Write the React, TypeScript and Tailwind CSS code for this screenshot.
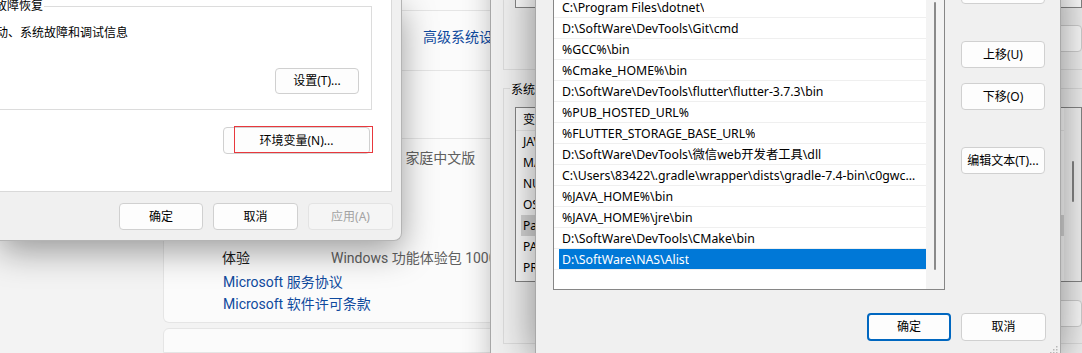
import React from "react";

const FONT = "font-['Noto_Sans','Noto_Sans_CJK_SC',sans-serif]";

function Btn({
  children,
  className = "",
  variant = "normal",
}: {
  children?: React.ReactNode;
  className?: string;
  variant?: "normal" | "disabled" | "default";
}) {
  const look =
    variant === "disabled"
      ? "border border-[#e3e3e3] bg-[#f5f5f5] text-[#a3a3a3]"
      : variant === "default"
      ? "border-2 border-[#0067c0] bg-[#fdfdfd] text-black"
      : "border border-[#d0d0d0] bg-[#fdfdfd] text-black";
  return (
    <div
      className={
        "flex shrink-0 items-center justify-center rounded-[4px] text-[12px] leading-none " +
        look +
        " " +
        className
      }
    >
      {children}
    </div>
  );
}

function SettingsPage() {
  const specs: [string, React.ReactNode][] = [
    [
      "版本",
      <>
        <span className="tracking-[-0.5px]">Windows 11 </span>家庭中文版
      </>,
    ],
    ["版本号", "22H2"],
    ["安装日期", "2022/11/3"],
    ["操作系统版本", "22621.1"],
    ["体验", "Windows 功能体验包 1000.22641.1000.0"],
  ];
  return (
    <div className="flex h-full pl-[163px] font-['Roboto','Noto_Sans_CJK_SC',sans-serif] text-[14px]">
      <div className="flex w-[900px] shrink-0 flex-col">
        <div className="flex flex-col rounded-b-[6px] border border-t-0 border-[#e5e5e5] bg-[#fbfbfb]">
          <div className="h-[11px] border-b border-[#e5e5e5]" />
          <div className="flex h-[60px] items-center gap-[22px] border-b border-[#e5e5e5] pb-[7px] pl-[89px] text-[#0f4a9e]">
            <span>域或工作组</span>
            <span>系统保护</span>
            <span>高级系统设置</span>
          </div>
          <div className="flex h-[68px] items-center border-b border-[#e5e5e5] pl-[58px] text-[#1b1b1b]">
            Windows 规格
          </div>
          <div className="flex flex-col pb-[7px] pt-[7px]">
            {specs.map(([k, v]) => (
              <div key={k} className="flex h-[25px] items-center pl-[58px]">
                <span className="w-[109px] shrink-0 text-[#1b1b1b]">{k}</span>
                <span className="whitespace-nowrap text-[#606060]">{v}</span>
              </div>
            ))}
            <div className="flex h-[22px] items-center pl-[59px] text-[#0f4a9e]">Microsoft 服务协议</div>
            <div className="flex h-[22px] items-center pl-[59px] text-[#0f4a9e]">Microsoft 软件许可条款</div>
          </div>
        </div>
        <div className="mt-[5px] h-[100px] rounded-t-[6px] border border-[#e5e5e5] bg-[#fbfbfb]" />
      </div>
    </div>
  );
}

function SystemProperties() {
  return (
    <div className="absolute left-0 top-0 flex h-[241px] w-[402px] flex-col rounded-br-[8px] border-b border-r border-[#b4b4b4] bg-[#f0f0f0] text-[12px] text-black shadow-[0_10px_34px_rgba(0,0,0,0.38)]">
      <div className="relative flex h-[192px] w-[392px] flex-col border-b border-r border-[#d9d9d9] bg-white">
        <div className="relative ml-[-60px] mt-[6px] flex h-[104px] w-[432px] flex-col border border-[#dcdcdc]">
          <span className="absolute left-[17px] top-[-9px] whitespace-nowrap bg-white px-[1px] leading-[16px]">
            启动和故障恢复
          </span>
          <div className="whitespace-nowrap pl-[19px] pt-[18px] leading-[16px]">系统启动、系统故障和调试信息</div>
          <div className="mt-[27px] flex justify-end pr-[12px]">
            <Btn className="h-[26px] w-[84px]">设置(T)...</Btn>
          </div>
        </div>
        <div className="mt-[17px] flex justify-end pr-[21px]">
          <Btn className="h-[27px] w-[147px]">环境变量(N)...</Btn>
        </div>
        <div className="absolute left-[234px] top-[126px] h-[27px] w-[139px] border border-[#e8383d]" />
      </div>
      <div className="mt-[11px] flex justify-end gap-[10px] pr-[8px]">
        <Btn className="h-[27px] w-[84px]">确定</Btn>
        <Btn className="h-[27px] w-[85px]">取消</Btn>
        <Btn className="h-[27px] w-[85px]" variant="disabled">
          应用(A)
        </Btn>
      </div>
    </div>
  );
}

function EnvDialog() {
  const sys: [string, boolean][] = [
    ["JAVA_HOME", false],
    ["MAVEN_HOME", false],
    ["NUMBER_OF_PROCESSORS", false],
    ["OS", false],
    ["Path", true],
    ["PATHEXT", false],
    ["PROCESSOR_ARCHITECTURE", false],
  ];
  return (
    <div className="absolute left-[490px] top-[-100px] flex h-[520px] w-[617px] flex-col border border-[#a8a8a8] bg-[#f0f0f0] px-[12px] text-[12px] text-black shadow-[0_0_26px_rgba(0,0,0,0.24)]">
      <div className="relative mt-[19px] flex flex-col border border-[#dcdcdc] px-[11px] pb-[17px] pt-[20px]">
        <span className="absolute left-[7px] top-[-8px] bg-[#f0f0f0] px-[1px] leading-[16px]">用户变量(U)</span>
        <div className="h-[67px] border border-[#868686] bg-white" />
        <div className="mt-[17px] flex justify-end gap-[10px]">
          <Btn className="h-[27px] w-[84px]">新建(N)...</Btn>
          <Btn className="h-[27px] w-[84px]">编辑(E)...</Btn>
          <Btn className="h-[27px] w-[84px]">删除(D)</Btn>
        </div>
      </div>
      <div className="relative mt-[18px] flex flex-col border border-[#dcdcdc] px-[11px] pb-[16px] pt-[18px]">
        <span className="absolute left-[6px] top-[-7px] bg-[#f0f0f0] px-[1px] leading-[16px]">系统变量(S)</span>
        <div className="flex h-[175px] border border-[#868686] bg-white">
          <div className="flex flex-1 flex-col">
            <div className="flex h-[23px] items-center border-b border-[#ececec] pt-[2px]">
              <span className="w-[160px] pl-[7px]">变量</span>
              <span className="pl-[7px]">值</span>
            </div>
            {sys.map(([n, sel]) => (
              <div key={n} className="flex h-[21px]">
                {sel ? (
                  <div className="ml-[5px] flex flex-1 items-center bg-[#d9d9d9] pl-[2px] pt-[1px]">{n}</div>
                ) : (
                  <div className="flex flex-1 items-center pl-[7px] pt-[1px]">{n}</div>
                )}
              </div>
            ))}
          </div>
          <div className="flex w-[17px] justify-center bg-[#f4f4f4]">
            <div className="mt-[53px] h-[41px] w-[2px] rounded-full bg-[#858585]" />
          </div>
        </div>
        <div className="mt-[18px] flex justify-end gap-[10px]">
          <Btn className="h-[27px] w-[84px]">新建(W)...</Btn>
          <Btn className="h-[27px] w-[84px]">编辑(I)...</Btn>
          <Btn className="h-[27px] w-[84px]">删除(L)</Btn>
        </div>
      </div>
      <div className="mt-[14px] flex justify-end gap-[10px]">
        <Btn className="h-[27px] w-[84px]">确定</Btn>
        <Btn className="h-[27px] w-[84px]">取消</Btn>
      </div>
    </div>
  );
}

function EditDialog() {
  const paths = [
    "C:\\Program Files\\dotnet\\",
    "D:\\SoftWare\\DevTools\\Git\\cmd",
    "%GCC%\\bin",
    "%Cmake_HOME%\\bin",
    "D:\\SoftWare\\DevTools\\flutter\\flutter-3.7.3\\bin",
    "%PUB_HOSTED_URL%",
    "%FLUTTER_STORAGE_BASE_URL%",
    "D:\\SoftWare\\DevTools\\微信web开发者工具\\dll",
    "C:\\Users\\83422\\.gradle\\wrapper\\dists\\gradle-7.4-bin\\c0gwcg53nkjbqw7r0h0umtfa\\gradle-7.4\\bin",
    "%JAVA_HOME%\\bin",
    "%JAVA_HOME%\\jre\\bin",
    "D:\\SoftWare\\DevTools\\CMake\\bin",
    "D:\\SoftWare\\NAS\\Alist",
  ];
  return (
    <div className="absolute left-[535px] top-[-30px] flex h-[387px] w-[526px] flex-col border border-[#a8a8a8] bg-[#f0f0f0] text-[12px] text-black shadow-[0_4px_40px_rgba(0,0,0,0.45)]">
      <div className="flex">
        <div className="ml-[17px] mt-[25px] flex h-[294px] w-[392px] border border-[#868686] bg-white">
          <div className="flex w-[372px] flex-col overflow-hidden text-[12.3px]">
            {paths.map((p, i) => (
              <div key={i} className="flex h-[21px] shrink-0 border-b border-[#efefef]">
                {i === paths.length - 1 ? (
                  <div className="ml-[5px] flex min-w-0 flex-1 items-center bg-[#0078d7] pl-[3px] pt-[2px] text-white">
                    <span className="truncate">{p}</span>
                  </div>
                ) : (
                  <div className="flex min-w-0 flex-1 items-center pl-[8px] pr-[6px] pt-[2px]">
                    <span className="truncate">{p}</span>
                  </div>
                )}
              </div>
            ))}
          </div>
          <div className="flex w-[18px] justify-center bg-[#f3f3f3]">
            <div className="mt-[5px] h-[268px] w-[2px] rounded-full bg-[#8a8a8a]" />
          </div>
        </div>
        <div className="ml-[16px] mt-[6px] flex flex-col">
          <Btn className="h-[27px] w-[84px]">删除(D)</Btn>
          <Btn className="mt-[37px] h-[27px] w-[84px]">上移(U)</Btn>
          <Btn className="mt-[15px] h-[27px] w-[84px]">下移(O)</Btn>
          <Btn className="mt-[37px] h-[27px] w-[84px]">编辑文本(T)...</Btn>
        </div>
      </div>
      <div className="mt-[23px] flex justify-end gap-[10px] pr-[14px]">
        <Btn className="h-[28px] w-[84px]" variant="default">
          确定
        </Btn>
        <Btn className="h-[28px] w-[85px]">取消</Btn>
      </div>
      <svg className="absolute bottom-[2px] right-[2px]" width="8" height="8" viewBox="0 0 8 8">
        <rect x="6" y="0" width="1.5" height="1.5" fill="#b8b8b8" />
        <rect x="3" y="3" width="1.5" height="1.5" fill="#b8b8b8" />
        <rect x="6" y="3" width="1.5" height="1.5" fill="#b8b8b8" />
        <rect x="0" y="6" width="1.5" height="1.5" fill="#b8b8b8" />
        <rect x="3" y="6" width="1.5" height="1.5" fill="#b8b8b8" />
        <rect x="6" y="6" width="1.5" height="1.5" fill="#b8b8b8" />
      </svg>
    </div>
  );
}

export default function App() {
  return (
    <div className={"relative h-[353px] w-[1082px] overflow-hidden bg-[#f3f3f3] " + FONT}>
      <SettingsPage />
      <SystemProperties />
      <EnvDialog />
      <EditDialog />
    </div>
  );
}
